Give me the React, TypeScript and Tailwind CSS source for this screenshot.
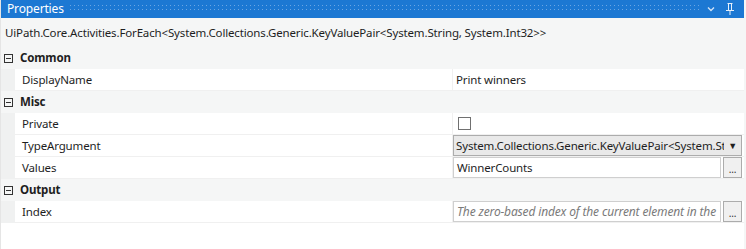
import React from "react";

const font = "font-['Noto_Sans',sans-serif] tracking-[-0.15px]";

const Category = ({ title }: { title: string }) => (
  <div className="flex h-[22px] items-center bg-[#f5f6f6]">
    <div className="flex w-[14px] shrink-0 justify-center">
      <div className="relative h-[9px] w-[9px] border border-[#333]">
        <div className="absolute left-[1px] top-[3px] h-[1px] w-[5px] bg-[#333]" />
      </div>
    </div>
    <span className="pl-[5px] text-[11.5px] font-bold text-[#1e1e1e]">{title}</span>
  </div>
);

const Row = ({ name, children }: { name: string; children?: React.ReactNode }) => (
  <div className="flex h-[22px]">
    <div className="w-[14px] shrink-0 bg-[#f0f1f1]" />
    <div className="flex min-w-0 flex-1 border-b border-[#f0f0f0] bg-white">
      <div className="flex w-[438px] shrink-0 items-center border-r border-[#f0f0f0] pl-[7px] text-[11.5px] text-[#1e1e1e]">
        {name}
      </div>
      <div className="flex min-w-0 flex-1 items-center pr-[2px]">{children}</div>
    </div>
  </div>
);

const Ellipsis = () => (
  <div className="ml-[2px] flex h-[21px] w-[19px] shrink-0 items-end justify-center border border-[#acacac] bg-[#f0f0f0] pb-[3px] text-[10px] leading-none text-[#333]">
    ...
  </div>
);

export default function App() {
  return (
    <div className={`${font} h-[249px] w-[746px] overflow-hidden border-l border-[#e5e5e5] bg-[#f5f6f6] pr-[2px]`}>
      <div className="flex h-[18px] items-center bg-[#1c78d3] text-white">
        <span className="pl-[6px] text-[12px]">Properties</span>
        <svg className="ml-[6px] h-[18px] flex-1" preserveAspectRatio="none">
          <defs>
            <pattern id="grip" width="4" height="4" patternUnits="userSpaceOnUse">
              <rect x="0" y="1" width="1" height="1" fill="#6aa6e4" />
            </pattern>
          </defs>
          <rect x="0" y="4" width="100%" height="8" fill="url(#grip)" />
        </svg>
        <svg width="10" height="18" className="ml-[6px]" viewBox="0 0 10 18">
          <path d="M2 7.5 L5 10.5 L8 7.5" stroke="#cfe2f6" strokeWidth="1.4" fill="none" />
        </svg>
        <svg width="12" height="18" className="ml-[8px] mr-[8px]" viewBox="0 0 12 18">
          <path d="M3.5 3.5 H8.5 M4.5 3.5 V10 M7.5 3.5 V10 M2 10.5 H10 M6 10.5 V15" stroke="#e6f0fb" strokeWidth="1" fill="none" />
        </svg>
      </div>
      <div className="flex h-[29px] items-center pl-[4px] text-[11.5px] text-[#1e1e1e]">
        UiPath.Core.Activities.ForEach&lt;System.Collections.Generic.KeyValuePair&lt;System.String, System.Int32&gt;&gt;
      </div>
      <Category title="Common" />
      <Row name="DisplayName">
        <span className="pl-[3px] text-[11.5px] text-[#1e1e1e]">Print winners</span>
      </Row>
      <Category title="Misc" />
      <Row name="Private">
        <div className="ml-[5px] h-[13px] w-[13px] border border-[#707070] bg-white" />
      </Row>
      <Row name="TypeArgument">
        <div className="flex h-[21px] min-w-0 flex-1 items-center overflow-hidden border border-[#acacac] bg-[#e9e9e9] pl-[2px] text-[11.5px] text-[#1e1e1e]">
          <span className="min-w-0 flex-1 overflow-hidden whitespace-nowrap">
            System.Collections.Generic.KeyValuePair&lt;System.St
          </span>
          <span className="px-[4px] text-[9px]">▼</span>
        </div>
      </Row>
      <Row name="Values">
        <div className="flex h-[21px] min-w-0 flex-1 items-center border border-[#cfcfcf] bg-white pl-[3px] text-[11.5px] text-[#1e1e1e]">
          WinnerCounts
        </div>
        <Ellipsis />
      </Row>
      <Category title="Output" />
      <Row name="Index">
        <div className="flex h-[21px] min-w-0 flex-1 items-center overflow-hidden whitespace-nowrap border border-[#cfcfcf] bg-white pl-[3px] text-[12px] italic text-[#7a7a7a]">
          The zero-based index of the current element in the
        </div>
        <Ellipsis />
      </Row>
      <div className="h-[30px] bg-white" />
    </div>
  );
}
